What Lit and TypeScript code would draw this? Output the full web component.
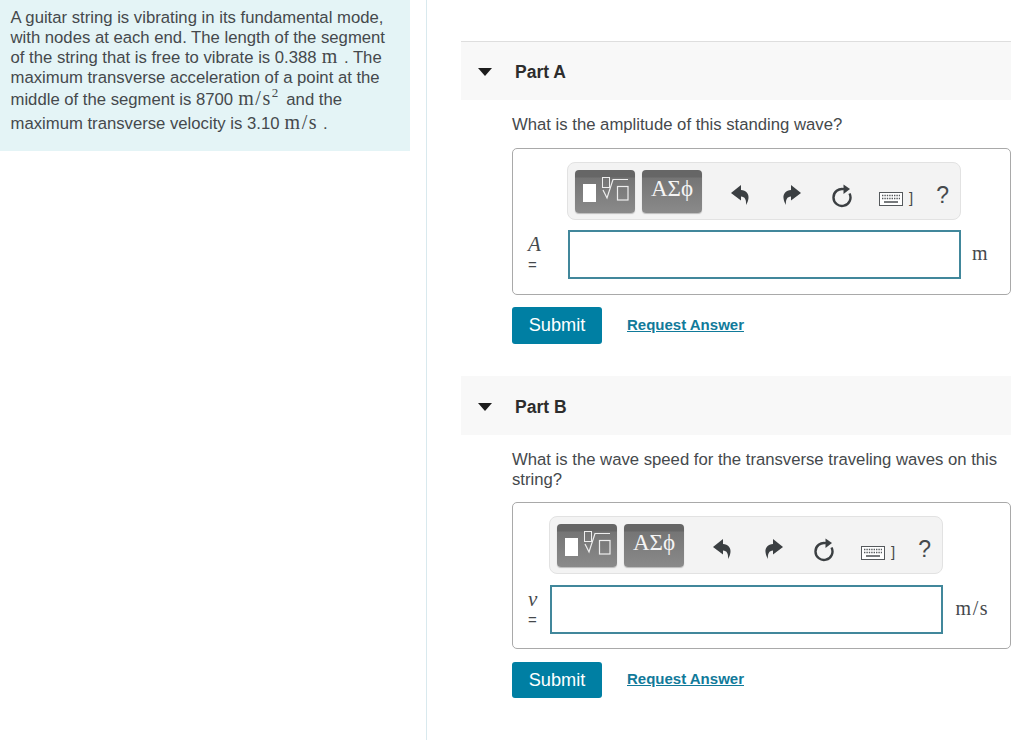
import { LitElement, html, css, svg } from "lit";
import { customElement, property } from "lit/decorators.js";

const undoIcon = svg`<path d="M0 8 L10 0 V5 C15 5 18 9 17.5 13 C17.3 16 16 18 15 20 C15.5 15 14 11.5 10 11.5 V15.5 Z" fill="#3b3f42"/>`;
const redoIcon = svg`<path d="M18 8 L8 0 V5 C3 5 0 9 0.5 13 C0.7 16 2 18 3 20 C2.5 15 4 11.5 8 11.5 V15.5 Z" fill="#3b3f42"/>`;

@customElement("answer-part")
class AnswerPart extends LitElement {
  @property() part = "";
  @property() question = "";
  @property() symbol = "";
  @property() unit = "";

  static styles = css`
    :host { display: block; }
    .head {
      height: 59px; background: #f8f8f8; display: flex; align-items: center;
      box-sizing: border-box; padding-top: 2px;
    }
    .head.ruled { border-top: 1px solid #dedede; padding-top: 1px; }
    .caret {
      width: 0; height: 0; margin-left: 17px; margin-right: 23px;
      border-left: 7.5px solid transparent; border-right: 7.5px solid transparent;
      border-top: 8px solid #1d1d1d;
    }
    .title { font: bold 17.5px/22px "Liberation Sans", sans-serif; color: #2d2d2d; }
    .body { padding: 15px 0 0 51px; }
    .q { font: 16.7px/20px "Liberation Sans", sans-serif; color: #45494c; margin-bottom: 13px; }
    .wide .q { margin-bottom: 12px; }
    .box {
      border: 1px solid #a9a9a9; border-radius: 5px; height: 147px; box-sizing: border-box;
      padding-top: 13px; display: flex; flex-direction: column; align-items: flex-end;
    }
    .toolbar {
      width: 394px; height: 58px; box-sizing: border-box; margin-right: 49px;
      background: #f3f3f3; border: 1px solid #e2e2e2; border-radius: 8px;
      display: flex; align-items: center; padding-left: 7px;
    }
    .wide .toolbar { margin-right: 67px; }
    .tbtn {
      width: 60px; height: 43px; box-sizing: border-box; border-radius: 4px; flex: none;
      background: linear-gradient(#666 0, #666 7px, #757575 8px, #8a8a8a 100%);
      box-shadow: 0 1px 1px #bbb; display: flex; align-items: flex-start; justify-content: center;
      color: #f4f4f4; font: 23px/38px "Liberation Serif", serif;
    }
    .tbtn svg { display: block; }
    .tbtn + .tbtn { margin-left: 7px; }
    .tools { display: flex; align-items: center; height: 100%; }
    .tools svg { display: block; flex: none; }
    .undo { margin-left: 29px; margin-top: 7px; }
    .redo { margin-left: 34px; margin-top: 7px; }
    .rot { margin-left: 30px; margin-top: 10px; }
    .kb { margin-left: 26px; margin-top: 15px; }
    .br { font: 15px "Liberation Sans", sans-serif; color: #44484b; margin-left: 6px; margin-top: 13px; }
    .help { font: 23px "Liberation Sans", sans-serif; color: #45494c; margin-left: 23px; margin-top: 9px; }
    .row { display: flex; align-items: center; margin-top: 10px; align-self: stretch; }
    .wide .row { margin-top: 11px; }
    .label {
      flex: 1; display: flex; flex-direction: column; align-items: flex-start; padding-left: 15px;
      color: #45494c; margin-top: -4px;
    }
    .sym { font: italic 21px/24px "Liberation Serif", serif; }
    .eq { font: 15px/17px "Liberation Sans", sans-serif; }
    .field {
      flex: none; width: 393px; height: 49px; box-sizing: border-box; background: #fff;
      border: 2px solid #41879b;
    }
    .unit {
      flex: none; width: 49px; text-align: right; font: 20px/24px "Liberation Serif", serif; color: #45494c;
      padding-right: 21px; box-sizing: border-box; letter-spacing: 1.5px; margin-top: -3px;
    }
    .wide .unit { width: 67px; }
    .actions { display: flex; align-items: center; margin-top: 12px; }
    .wide .actions { margin-top: 13px; }
    .submit {
      width: 90px; height: 37px; display: flex; align-items: center; justify-content: center;
      background: #007fa3; color: #fff; border-radius: 3px; font: 18.2px "Liberation Sans", sans-serif;
    }
    .wide .submit { height: 36px; }
    .req {
      margin-left: 25px; color: #117a9a; font: bold 15px/18px "Liberation Sans", sans-serif;
      text-decoration: underline; margin-top: -2px;
    }
  `;

  render() {
    return html`
      <div class="head ${this.part === "Part A" ? "ruled" : ""}">
        <span class="caret"></span><span class="title">${this.part}</span>
      </div>
      <div class="body ${this.unit.length > 1 ? "wide" : ""}">
        <div class="q">${this.question}</div>
        <div class="box">
          <div class="toolbar">
            <div class="tbtn">
              <svg width="60" height="43" viewBox="0 0 60 43">
                <rect x="8" y="14" width="13" height="18" fill="#fff"/>
                <rect x="27.5" y="7.5" width="7" height="10" fill="none" stroke="#eee"/>
                <path d="M28 20 L32 28 L38 9.5 H53" fill="none" stroke="#eee" stroke-width="1.2"/>
                <rect x="42.5" y="16.5" width="10.5" height="13.5" fill="none" stroke="#eee" stroke-width="1.2"/>
              </svg>
            </div>
            <div class="tbtn">ΑΣϕ</div>
            <div class="tools">
              <svg class="undo" width="18" height="20" viewBox="0 0 18 20">${undoIcon}</svg>
              <svg class="redo" width="18" height="20" viewBox="0 0 18 20">${redoIcon}</svg>
              <svg class="rot" width="22" height="24" viewBox="0 0 22 24">
                <path d="M13 5.2 A8.5 8.5 0 1 0 18.5 9.5" fill="none" stroke="#3b3f42" stroke-width="2.4"/>
                <path d="M12.5 0.5 V10 L19 5 Z" fill="#3b3f42"/>
              </svg>
              <svg class="kb" width="24" height="14" viewBox="0 0 24 14">
                <rect x="0.5" y="0.5" width="23" height="13" fill="#fff" stroke="#55595c"/>
                <path d="M3 3.5H21M3 6.5H21" stroke="#55595c" stroke-width="1.6" stroke-dasharray="1.4 1"/>
                <path d="M5 10H19" stroke="#55595c" stroke-width="1.6"/>
              </svg>
              <span class="br">]</span>
              <span class="help">?</span>
            </div>
          </div>
          <div class="row">
            <div class="label"><span class="sym">${this.symbol}</span><span class="eq">=</span></div>
            <div class="field"></div>
            <div class="unit">${this.unit}</div>
          </div>
        </div>
        <div class="actions">
          <div class="submit">Submit</div>
          <span class="req">Request Answer</span>
        </div>
      </div>
    `;
  }
}

@customElement("app-root")
class AppRoot extends LitElement {
  static styles = css`
    :host { display: flex; width: 1024px; height: 740px; overflow: hidden; background: #fff; }
    .left { width: 427px; height: 740px; box-sizing: border-box; border-right: 1px solid #d9e9ee; flex: none; }
    .intro {
      width: 410px; height: 151px; box-sizing: border-box; background: #e4f4f6; padding: 8px 10px 0 10.5px;
      font: 16.72px/20px "Liberation Sans", sans-serif; color: #45494c;
    }
    .m { font-family: "Liberation Serif", serif; font-size: 20px; line-height: 0; letter-spacing: 1.5px; margin: 0 0.5px; }
    sup { font-size: 13px; line-height: 0; margin-right: 1.5px; }
    .l5 { display: block; margin-top: 2px; }
    .l6 { display: block; margin-top: 4px; }
    .right { flex: none; width: 550px; margin-left: 34px; padding-top: 41px; }
    .partb { display: block; margin-top: 32px; }
  `;
  render() {
    return html`
      <div class="left">
        <div class="intro">
          A guitar string is vibrating in its fundamental mode,<br>
          with nodes at each end. The length of the segment<br>
          of the string that is free to vibrate is 0.388 <span class="m">m</span> . The<br>
          maximum transverse acceleration of a point at the<br>
          <span class="l5">middle of the segment is 8700 <span class="m">m/s<sup>2</sup></span> and the</span>
          <span class="l6">maximum transverse velocity is 3.10 <span class="m">m/s</span> .</span>
        </div>
      </div>
      <div class="right">
        <answer-part part="Part A" question="What is the amplitude of this standing wave?" symbol="A" unit="m"></answer-part>
        <answer-part class="partb" part="Part B"
          question="What is the wave speed for the transverse traveling waves on this string?"
          symbol="v" unit="m/s"></answer-part>
      </div>
    `;
  }
}
